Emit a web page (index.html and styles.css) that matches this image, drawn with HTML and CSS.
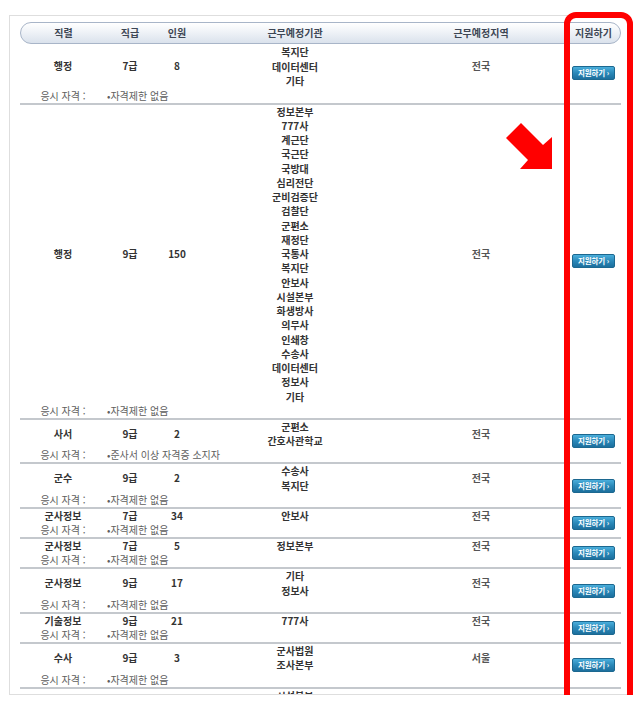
FILE: index.html
```html
<!DOCTYPE html>
<html lang="ko">
<head>
<meta charset="utf-8">
<title>채용 목록</title>
<link rel="stylesheet" href="styles.css">
</head>
<body>
<div class="panel">
  <div class="thead">
    <div>직렬</div><div>직급</div><div>인원</div><div>근무예정기관</div><div>근무예정지역</div><div class="h-apply">지원하기</div>
  </div>

  <div class="job first">
    <div class="c-series">행정</div><div class="c-grade">7급</div><div class="c-num">8</div>
    <div class="c-org">복지단<br>데이터센터<br>기타</div>
    <div class="c-region">전국</div>
    <div class="c-apply"><a class="btn" href="#">지원하기 ›</a></div>
    <div class="q-label">응시 자격 :</div><div class="q-text">•자격제한 없음</div>
  </div>

  <div class="job">
    <div class="c-series">행정</div><div class="c-grade">9급</div><div class="c-num">150</div>
    <div class="c-org">정보본부<br>777사<br>계근단<br>국근단<br>국방대<br>심리전단<br>군비검증단<br>검찰단<br>군편소<br>재정단<br>국통사<br>복지단<br>안보사<br>시설본부<br>화생방사<br>의무사<br>인쇄창<br>수송사<br>데이터센터<br>정보사<br>기타</div>
    <div class="c-region">전국</div>
    <div class="c-apply"><a class="btn" href="#">지원하기 ›</a></div>
    <div class="q-label">응시 자격 :</div><div class="q-text">•자격제한 없음</div>
  </div>

  <div class="job">
    <div class="c-series">사서</div><div class="c-grade">9급</div><div class="c-num">2</div>
    <div class="c-org">군편소<br>간호사관학교</div>
    <div class="c-region">전국</div>
    <div class="c-apply"><a class="btn" href="#">지원하기 ›</a></div>
    <div class="q-label">응시 자격 :</div><div class="q-text">•준사서 이상 자격증 소지자</div>
  </div>

  <div class="job">
    <div class="c-series">군수</div><div class="c-grade">9급</div><div class="c-num">2</div>
    <div class="c-org">수송사<br>복지단</div>
    <div class="c-region">전국</div>
    <div class="c-apply"><a class="btn" href="#">지원하기 ›</a></div>
    <div class="q-label">응시 자격 :</div><div class="q-text">•자격제한 없음</div>
  </div>

  <div class="job">
    <div class="c-series">군사정보</div><div class="c-grade">7급</div><div class="c-num">34</div>
    <div class="c-org">안보사</div>
    <div class="c-region">전국</div>
    <div class="c-apply"><a class="btn" href="#">지원하기 ›</a></div>
    <div class="q-label">응시 자격 :</div><div class="q-text">•자격제한 없음</div>
  </div>

  <div class="job">
    <div class="c-series">군사정보</div><div class="c-grade">7급</div><div class="c-num">5</div>
    <div class="c-org">정보본부</div>
    <div class="c-region">전국</div>
    <div class="c-apply"><a class="btn" href="#">지원하기 ›</a></div>
    <div class="q-label">응시 자격 :</div><div class="q-text">•자격제한 없음</div>
  </div>

  <div class="job">
    <div class="c-series">군사정보</div><div class="c-grade">9급</div><div class="c-num">17</div>
    <div class="c-org">기타<br>정보사</div>
    <div class="c-region">전국</div>
    <div class="c-apply"><a class="btn" href="#">지원하기 ›</a></div>
    <div class="q-label">응시 자격 :</div><div class="q-text">•자격제한 없음</div>
  </div>

  <div class="job">
    <div class="c-series">기술정보</div><div class="c-grade">9급</div><div class="c-num">21</div>
    <div class="c-org">777사</div>
    <div class="c-region">전국</div>
    <div class="c-apply"><a class="btn" href="#">지원하기 ›</a></div>
    <div class="q-label">응시 자격 :</div><div class="q-text">•자격제한 없음</div>
  </div>

  <div class="job">
    <div class="c-series">수사</div><div class="c-grade">9급</div><div class="c-num">3</div>
    <div class="c-org">군사법원<br>조사본부</div>
    <div class="c-region">서울</div>
    <div class="c-apply"><a class="btn" href="#">지원하기 ›</a></div>
    <div class="q-label">응시 자격 :</div><div class="q-text">•자격제한 없음</div>
  </div>

  <div class="job partial">
    <div class="c-org">시설본부</div>
  </div>
</div>

<div class="annot-box"></div>
<svg class="annot-arrow" width="46" height="46" viewBox="0 0 46 46">
  <polygon points="15,0 37,22 46,14 46,46 14,46 22,37 0,15" fill="#ff0000"/>
</svg>
</body>
</html>
```

FILE: styles.css
```css
html, body {
  margin: 0;
  padding: 0;
  background: #fff;
}

body {
  position: relative;
  font-family: "Noto Sans CJK KR", "Noto Sans", sans-serif;
  font-size: 10px;
}

.panel {
  margin: 15px 0 0 9px;
  width: 620px;
  height: 680px;
  box-sizing: border-box;
  border: 1px solid #dedede;
  padding: 6px 7px 0 10px;
  overflow: hidden;
}

.thead {
  display: grid;
  grid-template-columns: 85px 48px 46px 190px 182px 48px;
  height: 22px;
  box-sizing: border-box;
  border: 1px solid #a8b5c8;
  border-radius: 11px;
  background: linear-gradient(#ffffff 0%, #f1f4f8 40%, #dae2ec 100%);
  align-items: center;
  text-align: center;
  font-weight: bold;
  font-size: 10px;
  line-height: 14px;
  color: #3d4654;
}

.h-apply {
  padding-right: 5px;
}

.job {
  display: grid;
  grid-template-columns: 86px 48px 46px 190px 182px 49px;
  grid-template-rows: auto 14px;
  border-bottom: 2px solid #c4c8cd;
  color: #333;
}

.job > div {
  text-align: center;
  align-self: center;
  font-weight: bold;
  line-height: 14.25px;
}

.first .c-org {
  line-height: 14.5px;
  padding-top: 1px;
}

.job > .c-org {
  grid-column: 4;
  grid-row: 1;
}

.partial {
  border-bottom: 0;
}

.c-region {
  color: #555;
}

.c-apply {
  grid-column: 6;
  grid-row: 1 / 3;
  padding-right: 6px;
  display: flex;
  justify-content: center;
}

.job > .q-label,
.job > .q-text {
  grid-row: 2;
  font-weight: normal;
  color: #5e5e5e;
  line-height: 14px;
}

.q-label {
  grid-column: 1;
}

.job > .q-text {
  grid-column: 2 / 6;
  text-align: left;
  padding-left: 1px;
}

.btn {
  display: block;
  width: 43px;
  height: 14px;
  box-sizing: border-box;
  border: 1px solid #1c6890;
  border-radius: 2px;
  background: linear-gradient(#4aaedb 0%, #2a88b8 50%, #1c6f9d 100%);
  color: #fff;
  font-size: 7.5px;
  font-weight: bold;
  line-height: 12px;
  text-align: center;
  text-decoration: none;
  white-space: nowrap;
  letter-spacing: -0.2px;
}

/* annotation overlays */
.annot-box {
  position: absolute;
  left: 564px;
  top: 12px;
  width: 69px;
  height: 694px;
  box-sizing: border-box;
  border: 6px solid #ff0000;
  border-radius: 12px;
}

.annot-arrow {
  position: absolute;
  left: 506px;
  top: 123px;
}
```
